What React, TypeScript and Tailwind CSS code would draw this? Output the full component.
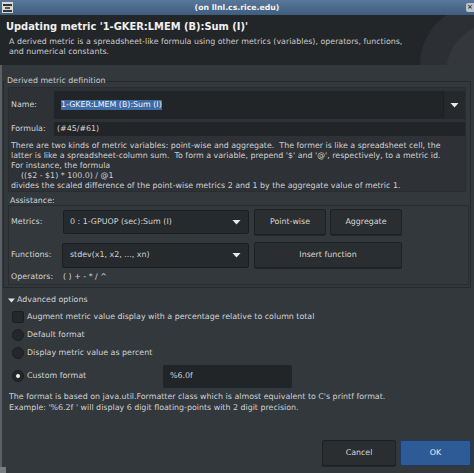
import React from "react";

const Arrow = ({ className = "" }: { className?: string }) => (
  <svg width="9" height="6" viewBox="0 0 9 6" className={className}>
    <path d="M0.5 1 L8.5 1 L4.5 5.5 Z" fill="#e8e8e8" />
  </svg>
);

const Radio = ({ checked = false }: { checked?: boolean }) => (
  <div className="w-[12px] h-[12px] rounded-full bg-[#25282b] border border-[#1c1f21] flex items-center justify-center shrink-0">
    {checked && <div className="w-[4px] h-[4px] rounded-full bg-[#f0f0f0]" />}
  </div>
);

const Button = ({ children, className = "" }: { children: React.ReactNode; className?: string }) => (
  <div
    className={
      "flex items-center justify-center rounded-[2px] border border-[#1e2124] bg-[#2a2e31] text-[#d8d8d8] shadow-[0_1px_0_#222527] " +
      className
    }
  >
    {children}
  </div>
);

export default function App() {
  return (
    <div
      className="w-[474px] h-[473px] overflow-hidden bg-[#33383c] text-[#d2d4d6] flex flex-col text-[7.9px]"
      style={{ fontFamily: '"DejaVu Sans", sans-serif' }}
    >
      {/* Title bar */}
      <div className="h-[15px] shrink-0 flex items-center relative bg-gradient-to-b from-[#58779a] to-[#3f5d7d]">
        <div className="absolute left-[2px] top-[2px] w-[11px] h-[11px] bg-[#d8d8d8] flex flex-col justify-center gap-[1px] px-[1px]">
          <div className="h-[2px] bg-[#333]" />
          <div className="h-[2px] bg-[#555] mx-[2px]" />
          <div className="h-[2px] bg-[#333]" />
        </div>
        <div className="flex-1 text-center text-[7.75px] font-bold text-[#f2f2f2] leading-none">(on llnl.cs.rice.edu)</div>
        <div className="absolute right-0 top-[3px] w-[8px] h-[9px] bg-[#b9c3cc] rounded-l-[2px] flex items-center justify-center text-[7px] font-bold text-[#333] leading-none">
          ×
        </div>
      </div>

      {/* Header */}
      <div className="h-[50px] shrink-0 bg-[#232629] relative overflow-hidden pl-[6px] pt-[6px]">
        <div className="absolute left-[420px] top-[-10px] w-[120px] h-[120px] rounded-full bg-[#2c3034]" />
        <div className="absolute left-[446px] top-[8px] w-[100px] h-[100px] rounded-full bg-[#34383c]" />
        <div className="relative text-[9.9px] font-bold text-[#f0f0f0] leading-[12px]">
          Updating metric '1-GKER:LMEM (B):Sum (I)'
        </div>
        <div className="relative pl-[3px] mt-[4px] leading-[9.5px] text-[#c8cacc]">
          A derived metric is a spreadsheet-like formula using other metrics (variables), operators, functions,
          <br />
          and numerical constants.
        </div>
      </div>

      {/* Body */}
      <div className="flex-1 flex flex-col border-l-[2px] border-[#5c6064] relative">
        <div className="h-[16px] shrink-0" />
        {/* Fieldset */}
        <div className="relative ml-[1px] mr-[3px] h-[207px] shrink-0 border border-[#262a2d] flex flex-col">
          <div className="absolute left-[2px] top-[-6px] px-[1px] bg-[#33383c] leading-[10px] text-[#c8cacc]">
            Derived metric definition
          </div>
          <div className="h-[5px] shrink-0" />
          <div className="mx-[4px] border border-[#292d30] bg-[#2e3236] flex flex-col">
            {/* Name row */}
            <div className="h-[28px] mt-[3px] flex items-center">
              <div className="w-[45px] pl-[2px]">Name:</div>
              <div className="flex-1 h-[28px] bg-[#222528] flex items-center pl-[7px]">
                <span className="bg-[#3e6aa6] text-[#f4f4f4] leading-[10px]">1-GKER:LMEM (B):Sum (I)</span>
              </div>
              <div className="w-[22px] h-[28px] bg-[#26292c] border-l border-[#1d2022] flex items-center justify-center">
                <Arrow />
              </div>
            </div>
            {/* Formula row */}
            <div className="h-[14px] flex items-center mt-[3px]">
              <div className="w-[45px] pl-[2px]">Formula:</div>
              <div className="flex-1 h-[14px] bg-[#222528] flex items-center pl-[3px]">(#45/#61)</div>
            </div>
            <div className="pl-[2px] pt-[5px] leading-[10px] text-[#cfd1d3] whitespace-pre">
              {"There are two kinds of metric variables: point-wise and aggregate.  The former is like a spreadsheet cell, the\n"}
              {"latter is like a spreadsheet-column sum.  To form a variable, prepend '$' and '@', respectively, to a metric id.\n"}
              {"For instance, the formula\n"}
              {"    (($2 - $1) * 100.0) / @1\n"}
              {"divides the scaled difference of the point-wise metrics 2 and 1 by the aggregate value of metric 1."}
            </div>
          </div>
          {/* Assistance */}
          <div className="pl-[6px] mt-[5px] h-[8px] leading-[8px]">Assistance:</div>
          <div className="ml-[4px] mr-[1px] h-[80px] border border-[#292d30] flex flex-col">
            <div className="h-[3px] shrink-0" />
            <div className="h-[26px] flex items-center">
              <div className="w-[54px] pl-[2px]">Metrics:</div>
              <div className="w-[186px] h-[24px] rounded-[2px] border border-[#1b1e20] bg-[#262a2d] flex items-center pl-[6px] pr-[7px]">
                <span className="flex-1">0 :  1-GPUOP (sec):Sum (I)</span>
                <Arrow />
              </div>
              <Button className="ml-[5px] w-[72px] h-[26px]">Point-wise</Button>
              <Button className="ml-[4px] w-[72px] h-[26px]">Aggregate</Button>
            </div>
            <div className="h-[7px] shrink-0" />
            <div className="h-[26px] flex items-center">
              <div className="w-[53px] pl-[2px]">Functions:</div>
              <div className="w-[187px] h-[25px] rounded-[2px] border border-[#1b1e20] bg-[#262a2d] flex items-center pl-[7px] pr-[7px]">
                <span className="flex-1">stdev(x1, x2, ..., xn)</span>
                <Arrow />
              </div>
              <Button className="ml-[5px] w-[148px] h-[26px]">Insert function</Button>
            </div>
            <div className="h-[14px] flex items-end pl-[2px] leading-[10px]">
              <span className="w-[52px]">Operators:</span>
              <span>( ) + - * / ^</span>
            </div>
          </div>
        </div>

        {/* Advanced options */}
        <div className="h-[7px] shrink-0" />
        <div className="flex items-center pl-[6px] h-[10px]">
          <svg width="7" height="5" viewBox="0 0 7 5" className="mr-[2px]">
            <path d="M0 0.5 L7 0.5 L3.5 4.5 Z" fill="#e0e0e0" />
          </svg>
          Advanced options
        </div>
        <div className="h-[5px] shrink-0" />
        <div className="flex items-center pl-[10px] h-[14px]">
          <div className="w-[12px] h-[12px] rounded-[2px] bg-[#25282b] border border-[#1c1f21] mr-[3px]" />
          Augment metric value display with a percentage relative to column total
        </div>
        <div className="h-[4px] shrink-0" />
        <div className="flex items-center pl-[10px] h-[14px]">
          <Radio />
          <span className="ml-[3px]">Default format</span>
        </div>
        <div className="h-[4px] shrink-0" />
        <div className="flex items-center pl-[10px] h-[14px]">
          <Radio />
          <span className="ml-[3px]">Display metric value as percent</span>
        </div>
        <div className="h-[4px] shrink-0" />
        <div className="flex items-center pl-[10px] h-[24px]">
          <Radio checked />
          <span className="ml-[3px] w-[136px]">Custom format</span>
          <div className="w-[129px] h-[23px] bg-[#222528] rounded-[2px] flex items-center pl-[7px]">%6.0f</div>
        </div>
        <div className="pl-[7px] pt-[3px] leading-[11px] text-[#cfd1d3]">
          The format is based on java.util.Formatter class which is almost equivalent to C's printf format.
          <br />
          Example: '%6.2f ' will display 6 digit floating-points with 2 digit precision.
        </div>
        <div className="flex-1" />
        <div className="flex justify-end gap-[4px] pr-[3px] pb-[7px]">
          <Button className="w-[74px] h-[26px]">Cancel</Button>
          <div className="w-[71px] h-[26px] rounded-[2px] border border-[#1e3c63] bg-[#2e5a96] text-[#f0f0f0] flex items-center justify-center">
            OK
          </div>
        </div>
        <div className="absolute left-[-2px] bottom-0 w-[6px] h-[6px] bg-[#7a7e82]" />
      </div>
    </div>
  );
}
